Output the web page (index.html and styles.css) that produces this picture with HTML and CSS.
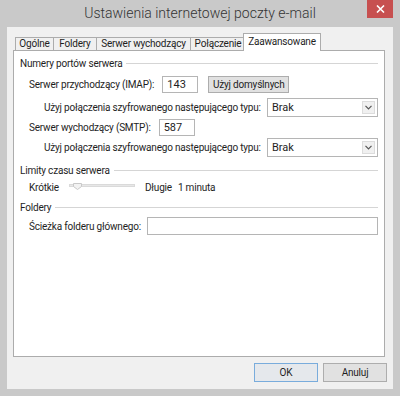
FILE: index.html
```html
<!DOCTYPE html>
<html lang="pl">
<head>
    <meta charset="UTF-8">
    <meta name="viewport" content="width=device-width, initial-scale=1.0">
    <title>Ustawienia internetowej poczty e-mail</title>
    <link rel="stylesheet" href="styles.css">
</head>
<body>
    <div class="window">
        <div class="titlebar">
            <div class="title">Ustawienia internetowej poczty e-mail</div>
            <button class="close-button" aria-label="Zamknij">
                <svg width="9" height="8" viewBox="0 0 9 8">
                    <path d="M1 0.5 L8 7.5 M8 0.5 L1 7.5" stroke="#fff" stroke-width="1.6" fill="none"/>
                </svg>
            </button>
        </div>
        <div class="client">
            <div class="tabs">
                <div class="tab tab-general">Ogólne</div>
                <div class="tab tab-folders">Foldery</div>
                <div class="tab tab-outgoing">Serwer wychodzący</div>
                <div class="tab tab-connection">Połączenie</div>
                <div class="tab tab-advanced active">Zaawansowane</div>
            </div>
            <div class="panel">
                <div class="group-title">
                    <span>Numery portów serwera</span>
                    <div class="group-line"></div>
                </div>
                <div class="row row-imap indent">
                    <label>Serwer przychodzący (IMAP):</label>
                    <input class="port-field" type="text" value="143">
                    <button class="button defaults-button">Użyj domyślnych</button>
                </div>
                <div class="row row-enc1 indent-deep">
                    <label>Użyj połączenia szyfrowanego następującego typu:</label>
                    <div class="combo">
                        <span>Brak</span>
                        <div class="combo-arrow">
                            <svg width="7" height="5" viewBox="0 0 7 5">
                                <path d="M0.5 0.8 L3.5 3.8 L6.5 0.8" stroke="#555" stroke-width="1.2" fill="none"/>
                            </svg>
                        </div>
                    </div>
                </div>
                <div class="row row-smtp indent">
                    <label>Serwer wychodzący (SMTP):</label>
                    <input class="port-field" type="text" value="587">
                </div>
                <div class="row row-enc2 indent-deep">
                    <label>Użyj połączenia szyfrowanego następującego typu:</label>
                    <div class="combo">
                        <span>Brak</span>
                        <div class="combo-arrow">
                            <svg width="7" height="5" viewBox="0 0 7 5">
                                <path d="M0.5 0.8 L3.5 3.8 L6.5 0.8" stroke="#555" stroke-width="1.2" fill="none"/>
                            </svg>
                        </div>
                    </div>
                </div>
                <div class="group-title group-gap">
                    <span>Limity czasu serwera</span>
                    <div class="group-line"></div>
                </div>
                <div class="row row-slider indent">
                    <label>Krótkie</label>
                    <svg class="slider" width="66" height="8" viewBox="0 0 66 8">
                        <rect x="0.5" y="1.5" width="65" height="2" fill="#e7e7e7" stroke="#dadada"/>
                        <path d="M4.5 0.5 H12.5 V3.5 L8.5 6.5 L4.5 3.5 Z" fill="#f2f2f2" stroke="#c8c8c8"/>
                    </svg>
                    <span class="slider-max">Długie</span>
                    <span class="slider-value">1 minuta</span>
                </div>
                <div class="group-title group-gap">
                    <span>Foldery</span>
                    <div class="group-line"></div>
                </div>
                <div class="row row-path indent">
                    <label>Ścieżka folderu głównego:</label>
                    <input class="path-field" type="text" value="">
                </div>
            </div>
            <div class="dialog-buttons">
                <button class="button dialog-button default">OK</button>
                <button class="button dialog-button">Anuluj</button>
            </div>
        </div>
    </div>
</body>
</html>
```

FILE: styles.css
```css
body, html {
    margin: 0;
    padding: 0;
    background: #c9c9c9;
}
body {
    font-family: Roboto, "Liberation Sans", Arial, sans-serif;
    font-size: 10px;
    letter-spacing: -0.2px;
    color: #1e1e1e;
    white-space: nowrap;
}
.window {
    position: relative;
    width: 400px;
    height: 396px;
    display: flex;
    flex-direction: column;
}
.titlebar {
    height: 27px;
    display: flex;
    align-items: center;
    justify-content: center;
}
.title {
    font-size: 14px;
    font-weight: 300;
    letter-spacing: 0;
    color: #333;
    padding-bottom: 1px;
}
.close-button {
    position: absolute;
    top: 0;
    right: 7px;
    width: 26px;
    height: 18px;
    border: none;
    padding: 0;
    background: #c75050;
    display: flex;
    align-items: center;
    justify-content: center;
}
.client {
    margin: 0 7px;
    height: 362px;
    box-sizing: border-box;
    padding: 6px 8px 0 6px;
    background: #f0f0f0;
    display: flex;
    flex-direction: column;
}
.tabs {
    height: 17px;
    display: flex;
    align-items: flex-end;
    padding-left: 2px;
}
.tab {
    height: 13px;
    box-sizing: border-box;
    border: 1px solid #acacac;
    border-bottom: none;
    margin-right: -1px;
    background: #f0f0f0;
    line-height: 12px;
    text-align: center;
}
.tab-general { width: 39px; }
.tab-folders { width: 44px; }
.tab-outgoing { width: 95px; }
.tab-connection { width: 56px; }
.tab-advanced { width: 78px; }
.tab.active {
    position: relative;
    z-index: 1;
    height: 18px;
    margin: 0 0 -1px -2px;
    background: #fff;
    line-height: 16px;
}
.panel {
    height: 307px;
    box-sizing: border-box;
    border: 1px solid #acacac;
    background: #fff;
    padding: 5px 6px 0 6px;
    display: flex;
    flex-direction: column;
}
.group-title {
    height: 14px;
    display: flex;
    align-items: center;
    gap: 4px;
}
.group-gap {
    margin-top: 6px;
}
.group-line {
    flex: 1;
    height: 1px;
    background: #d5d5d5;
}
.row {
    display: flex;
    align-items: center;
}
.indent {
    padding-left: 9px;
}
.indent-deep {
    padding-left: 24px;
}
.row-imap {
    margin-top: 6px;
    height: 17px;
}
.row-enc1 {
    margin-top: 5px;
    height: 19px;
}
.row-smtp {
    margin-top: 2px;
    height: 17px;
}
.row-enc2 {
    margin-top: 2px;
    height: 19px;
}
.row-slider {
    margin-top: 3px;
    height: 14px;
}
.row-path {
    margin-top: 3px;
    height: 18px;
}
.port-field, .path-field {
    height: 100%;
    box-sizing: border-box;
    border: 1px solid #b5b5b5;
    background: #fff;
    font-family: inherit;
    font-size: 11px;
    letter-spacing: 0;
    color: #1e1e1e;
    padding: 0 4px;
    margin: 0 0 0 8px;
    outline: none;
}
.port-field {
    width: 36px;
}
.path-field {
    flex: 1;
    margin-left: 6px;
}
.combo {
    margin-left: auto;
    width: 111px;
    height: 100%;
    box-sizing: border-box;
    border: 1px solid #b5b5b5;
    background: #fff;
    display: flex;
    align-items: center;
    padding-left: 4px;
    font-size: 11px;
    letter-spacing: 0;
}
.combo span {
    flex: 1;
}
.combo-arrow {
    width: 13px;
    height: 13px;
    margin-right: 2px;
    box-sizing: border-box;
    border: 1px solid #dcdcdc;
    background: #f0f0f0;
    display: flex;
    align-items: center;
    justify-content: center;
}
.button {
    height: 100%;
    box-sizing: border-box;
    border: 1px solid #adadad;
    background: #e1e1e1;
    font-family: inherit;
    font-size: 10px;
    letter-spacing: -0.2px;
    color: #1e1e1e;
    padding: 0;
}
.defaults-button {
    width: 81px;
    margin-left: 10px;
}
.slider {
    margin-left: 10px;
}
.slider-max {
    margin-left: 10px;
}
.slider-value {
    margin-left: 6px;
}
.dialog-buttons {
    margin: 6px -2px 0 0;
    height: 19px;
    display: flex;
    justify-content: flex-end;
    gap: 5px;
}
.dialog-button {
    width: 64px;
}
.dialog-button.default {
    border-color: #79acdc;
    background: #e5e8ec;
}
```
